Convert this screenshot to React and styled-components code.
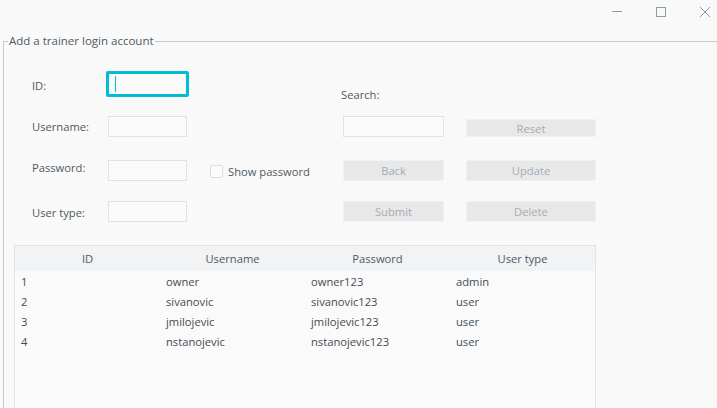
import React from "react";
import styled, { createGlobalStyle } from "styled-components";

const GlobalStyle = createGlobalStyle`
  html, body {
    margin: 0;
    height: 100%;
    overflow: hidden;
    background: #f9f9f9;
  }
  body {
    font-family: "Segoe UI", "Open Sans", "Noto Sans", sans-serif;
    font-size: 11.2px;
    color: #4f5963;
  }
`;

const Window = styled.div`
  width: 717px;
  height: 408px;
  overflow: hidden;
  background: #f9f9f9;
`;

const TitleBar = styled.div`
  height: 33px;
  display: flex;
  justify-content: flex-end;
  align-items: flex-start;
  gap: 34px;
  padding: 7px 7px 0 0;
  box-sizing: border-box;
`;

const WinIcon = styled.svg`
  width: 10px;
  height: 10px;
  display: block;
  stroke: #8d9ca9;
  stroke-width: 1;
  fill: none;
`;

const Group = styled.fieldset`
  margin: 0 0 0 3px;
  padding: 0;
  border: 1px solid #c9c9c9;
  border-right: none;
  border-bottom: none;
  min-width: 0;
`;

const Legend = styled.legend`
  margin-left: 4px;
  padding: 0 1px;
  font-size: 11.5px;
  line-height: 16px;
  color: #4f5963;
`;

const Form = styled.div`
  padding: 22px 0 0 28px;
`;

const Row = styled.div`
  display: flex;
  align-items: center;
  height: ${(p) => p.$h || 21}px;
  margin-top: ${(p) => p.$top || 0}px;
`;

const Label = styled.div`
  width: ${(p) => p.$w || 76}px;
  flex-shrink: 0;
  position: relative;
  top: ${(p) => p.$shift || 0}px;
  white-space: nowrap;
`;

const Input = styled.div`
  box-sizing: border-box;
  width: ${(p) => p.$w || 79}px;
  height: 21px;
  flex-shrink: 0;
  border: 1px solid #e2e2e2;
  background: #fafafa;
`;

const FocusInput = styled.div`
  box-sizing: border-box;
  width: 83px;
  height: 26px;
  margin-left: -2px;
  flex-shrink: 0;
  border: 3px solid #00bcd4;
  border-radius: 2px;
  background: #fafafa;
  display: flex;
  align-items: center;
  padding-left: 6px;
`;

const Caret = styled.div`
  width: 1px;
  height: 16px;
  background: #00bcd4;
`;

const Spacer = styled.div`
  width: ${(p) => p.$w}px;
  flex-shrink: 0;
`;

const CheckWrap = styled.label`
  display: flex;
  align-items: center;
  gap: 5px;
  width: 133px;
  flex-shrink: 0;
  position: relative;
  top: 1px;
`;

const Box = styled.span`
  box-sizing: border-box;
  width: 13px;
  height: 13px;
  border: 1px solid #dcdcdc;
  border-radius: 2px;
  background: #fcfcfc;
`;

const Button = styled.div`
  box-sizing: border-box;
  width: ${(p) => p.$w || 100}px;
  height: ${(p) => p.$h || 21}px;
  margin-left: ${(p) => p.$ml || 0}px;
  flex-shrink: 0;
  align-self: ${(p) => (p.$end ? "flex-end" : "center")};
  background: #e8e8e8;
  border: 1px solid #f1f1f1;
  color: #a3adb6;
  display: flex;
  align-items: center;
  justify-content: center;
`;

const SearchLabel = styled.div`
  align-self: flex-end;
  margin-bottom: -5px;
  margin-left: 1px;
`;

const TableWrap = styled.div`
  margin: 23px 0 0 10px;
  width: 582px;
  height: 200px;
  border: 1px solid #e3e3e3;
  border-bottom: none;
  box-sizing: border-box;
  background: #fafafa;
`;

const Table = styled.table`
  width: 580px;
  border-collapse: collapse;
  table-layout: fixed;
  font-size: inherit;
`;

const Th = styled.th`
  height: 25px;
  padding: 0;
  font-weight: normal;
  text-align: center;
  background: #f2f3f5;
  color: #4f5963;
`;

const Td = styled.td`
  height: 20px;
  padding: 0 0 0 6px;
  color: #434c55;
  white-space: nowrap;
`;

const users = [
  { id: 1, username: "owner", password: "owner123", type: "admin" },
  { id: 2, username: "sivanovic", password: "sivanovic123", type: "user" },
  { id: 3, username: "jmilojevic", password: "jmilojevic123", type: "user" },
  { id: 4, username: "nstanojevic", password: "nstanojevic123", type: "user" },
];

export default function App() {
  return (
    <Window>
      <GlobalStyle />
      <TitleBar>
        <WinIcon viewBox="0 0 10 10">
          <path d="M0 4.5h10" />
        </WinIcon>
        <WinIcon viewBox="0 0 10 10">
          <rect x="0.5" y="0.5" width="9" height="9" />
        </WinIcon>
        <WinIcon viewBox="0 0 10 10">
          <path d="M0 0l10 10M10 0L0 10" />
        </WinIcon>
      </TitleBar>

      <Group>
        <Legend>Add a trainer login account</Legend>
        <Form>
          <Row $h={26}>
            <Label $shift={1}>ID:</Label>
            <FocusInput>
              <Caret />
            </FocusInput>
            <Spacer $w={151} />
            <SearchLabel>Search:</SearchLabel>
          </Row>

          <Row $top={19}>
            <Label>Username:</Label>
            <Input />
            <Spacer $w={156} />
            <Input $w={101} />
            <Button $w={130} $h={18} $ml={22} $end>
              Reset
            </Button>
          </Row>

          <Row $top={23}>
            <Label $shift={-3}>Password:</Label>
            <Input />
            <Spacer $w={23} />
            <CheckWrap>
              <Box />
              Show password
            </CheckWrap>
            <Button $w={101}>Back</Button>
            <Button $w={130} $ml={22}>
              Update
            </Button>
          </Row>

          <Row $top={20}>
            <Label $shift={1}>User type:</Label>
            <Input />
            <Spacer $w={156} />
            <Button $w={101}>Submit</Button>
            <Button $w={130} $ml={22}>
              Delete
            </Button>
          </Row>
        </Form>

        <TableWrap>
          <Table>
            <thead>
              <tr>
                <Th>ID</Th>
                <Th>Username</Th>
                <Th>Password</Th>
                <Th>User type</Th>
              </tr>
            </thead>
            <tbody>
              {users.map((u) => (
                <tr key={u.id}>
                  <Td>{u.id}</Td>
                  <Td>{u.username}</Td>
                  <Td>{u.password}</Td>
                  <Td>{u.type}</Td>
                </tr>
              ))}
            </tbody>
          </Table>
        </TableWrap>
      </Group>
    </Window>
  );
}
